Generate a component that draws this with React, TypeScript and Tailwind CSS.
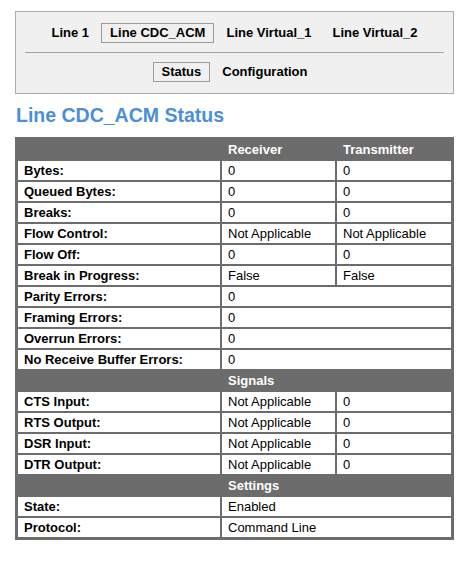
import React from "react";

type Row =
  | { kind: "section"; label: string }
  | { kind: "pair"; label: string; rx: string; tx: string }
  | { kind: "single"; label: string; value: string };

const rows: Row[] = [
  { kind: "pair", label: "Bytes:", rx: "0", tx: "0" },
  { kind: "pair", label: "Queued Bytes:", rx: "0", tx: "0" },
  { kind: "pair", label: "Breaks:", rx: "0", tx: "0" },
  { kind: "pair", label: "Flow Control:", rx: "Not Applicable", tx: "Not Applicable" },
  { kind: "pair", label: "Flow Off:", rx: "0", tx: "0" },
  { kind: "pair", label: "Break in Progress:", rx: "False", tx: "False" },
  { kind: "single", label: "Parity Errors:", value: "0" },
  { kind: "single", label: "Framing Errors:", value: "0" },
  { kind: "single", label: "Overrun Errors:", value: "0" },
  { kind: "single", label: "No Receive Buffer Errors:", value: "0" },
  { kind: "section", label: "Signals" },
  { kind: "pair", label: "CTS Input:", rx: "Not Applicable", tx: "0" },
  { kind: "pair", label: "RTS Output:", rx: "Not Applicable", tx: "0" },
  { kind: "pair", label: "DSR Input:", rx: "Not Applicable", tx: "0" },
  { kind: "pair", label: "DTR Output:", rx: "Not Applicable", tx: "0" },
  { kind: "section", label: "Settings" },
  { kind: "single", label: "State:", value: "Enabled" },
  { kind: "single", label: "Protocol:", value: "Command Line" },
];

const lines = ["Line 1", "Line CDC_ACM", "Line Virtual_1", "Line Virtual_2"];
const tabs = ["Status", "Configuration"];

function NavItem({ label, active }: { label: string; active: boolean }) {
  return (
    <span
      className={`flex h-[20px] items-center border px-2 font-bold ${
        active ? "border-[#9a9a9a]" : "border-transparent"
      }`}
    >
      {label}
    </span>
  );
}

const cell = "flex h-[19px] items-center bg-white pl-[6px] whitespace-nowrap";

export default function App() {
  return (
    <div
      className="min-h-[566px] bg-white pt-[11px] text-[13px] text-black"
      style={{ fontFamily: '"Liberation Sans", Arial, sans-serif' }}
    >
      <div className="ml-[15px] w-[439px] border border-[#ababab] bg-[#f0f0f0] pt-[11px] pb-[11px]">
        <div className="flex justify-center gap-[3px]">
          {lines.map((l) => (
            <NavItem key={l} label={l} active={l === "Line CDC_ACM"} />
          ))}
        </div>
        <div className="mx-[9px] my-[9px] h-px bg-[#a0a0a0]" />
        <div className="flex justify-center gap-[3px]">
          {tabs.map((t) => (
            <NavItem key={t} label={t} active={t === "Status"} />
          ))}
        </div>
      </div>

      <h1 className="ml-[16px] mt-[9px] mb-[10px] h-[24px] text-[19.5px] leading-[24px] font-bold text-[#4a8fd8]">
        Line CDC_ACM Status
      </h1>

      <div className="ml-[15px] grid w-[439px] grid-cols-[202px_113px_114px] gap-[2px] bg-[#6c6c6c] p-[3px]">
        <div className="h-[19px]" />
        <div className="flex h-[19px] items-center pl-[6px] font-bold text-white">Receiver</div>
        <div className="flex h-[19px] items-center pl-[6px] font-bold text-white">Transmitter</div>

        {rows.map((r) => {
          if (r.kind === "section") {
            return (
              <React.Fragment key={r.label}>
                <div className="h-[19px]" />
                <div className="col-span-2 flex h-[19px] items-center pl-[6px] font-bold text-white">
                  {r.label}
                </div>
              </React.Fragment>
            );
          }
          if (r.kind === "single") {
            return (
              <React.Fragment key={r.label}>
                <div className={`${cell} font-bold`}>{r.label}</div>
                <div className={`${cell} col-span-2`}>{r.value}</div>
              </React.Fragment>
            );
          }
          return (
            <React.Fragment key={r.label}>
              <div className={`${cell} font-bold`}>{r.label}</div>
              <div className={cell}>{r.rx}</div>
              <div className={cell}>{r.tx}</div>
            </React.Fragment>
          );
        })}
      </div>
    </div>
  );
}
